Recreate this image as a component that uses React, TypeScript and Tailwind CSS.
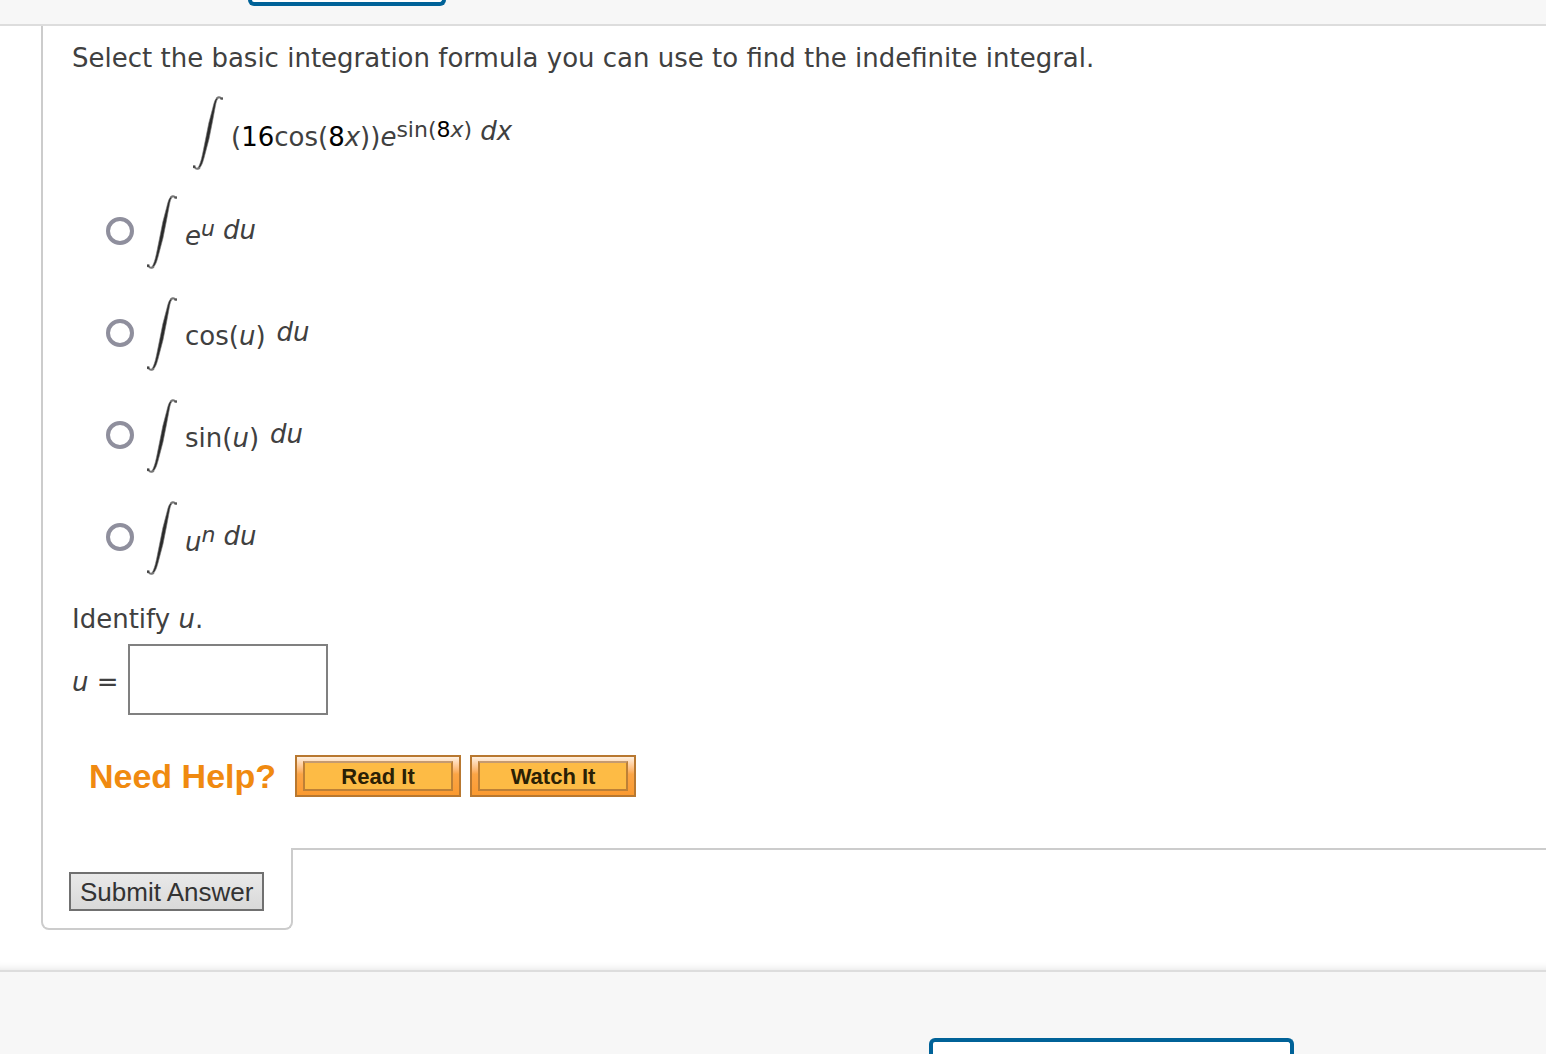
import React, { useState } from 'react';

const Integral = () => (
    <svg viewBox="0 0 30 74" fill="none" className="w-[30px] h-[74px] shrink-0" aria-hidden="true">
        <path d="M25.5 1 C22.5 1.6 21.2 6 20 11 L15.8 27 L11.6 48 C10 56 8.4 64.5 6.6 68.6 C5.8 70.8 5 72 4 72.8 C7.4 73.2 9.4 68 11 62 L16 43 L19.6 25 L22.2 11 C23.2 6 23.8 3 26 1.6 Z" fill="#2a2a2a" stroke="#777" strokeWidth="0.6" />
        <path d="M23.6 2.6 C25 0.8 26.8 1 28 2.2 L30 2.4" stroke="#777" strokeWidth="2" />
        <path d="M27.5 2.6 H30" stroke="#555" strokeWidth="2" />
        <path d="M6.8 71.4 C5.4 73.4 3.4 73.2 2 71.6 L0 71" stroke="#777" strokeWidth="2" />
        <path d="M0 70.6 H2.4" stroke="#444" strokeWidth="2.4" />
    </svg>
);

const Sup = ({ children }: any) => (
    <span className="relative -top-[9px] text-[22px] leading-none">{children}</span>
);

const Num = ({ children }: any) => <span className="text-black">{children}</span>;

const Formula = ({ children, raised, variable }: any) => (
    <span className="flex items-center gap-2 whitespace-nowrap">
        <Integral />
        <span className={raised ? "pt-2" : "pt-1 pr-[3px]"}>{children}</span>
        <i className="pb-1">d{variable}</i>
    </span>
);

const options = [
    { id: "exp", raised: true, body: <><i>e</i><Sup><i>u</i></Sup></> },
    { id: "cos", raised: false, body: <>cos(<i>u</i>)</> },
    { id: "sin", raised: false, body: <>sin(<i>u</i>)</> },
    { id: "power", raised: true, body: <><i>u</i><Sup><i>n</i></Sup></> },
];

const HelpButton = ({ children }: any) => (
    <button
        type="button"
        className="w-[166px] h-[42px] px-[6px] py-1 border-2 border-[#b87830] bg-linear-to-b from-[#fff0e0] via-[#fba545] via-45% to-[#fb9a30] cursor-pointer"
    >
        <span className="flex h-full items-center justify-center border-2 border-[#bd8036] border-t-[#c49a70] bg-[#fdbb45] pt-0.5 text-[22px] leading-6 font-bold text-[#2a2005]">
            {children}
        </span>
    </button>
);

const App = () => {
    const [selected, setSelected] = useState("");
    const [answer, setAnswer] = useState("");

    return (
        <div className="min-h-screen overflow-hidden flex flex-col bg-white text-[26px] leading-8 text-[#404040] font-['DejaVu_Sans',sans-serif]">
            <header className="h-[26px] bg-[#f7f7f7] border-b-2 border-[#ddd] pl-[248px]">
                <div className="w-[198px] h-[6px] rounded-b-lg border-4 border-t-0 border-[#006298] bg-white" />
            </header>

            <main className="pl-[41px] pb-10 border-b-2 border-[#ddd] shadow-[inset_0_-8px_8px_-8px_#0002]">
                <section className="border-l-2 border-[#ccc] pl-[29px] pt-4 pb-[51px]">
                    <h1 className="font-normal">
                        Select the basic integration formula you can use to find the indefinite integral.
                    </h1>
                    <div className="mt-[22px] pl-[121px]">
                        <Formula raised variable="x">
                            (<Num>16</Num>cos(<Num>8</Num><i>x</i>))<i>e</i>
                            <Sup>sin(<Num>8</Num><i>x</i>)</Sup>
                        </Formula>
                    </div>

                    <div className="mt-[25px] pl-[34px] flex flex-col items-start gap-7">
                        {options.map((option) => (
                            <label key={option.id} className="flex items-center gap-[13px]">
                                <input
                                    type="radio"
                                    name="formula"
                                    checked={selected === option.id}
                                    onChange={() => setSelected(option.id)}
                                    className="mb-0.5 size-7 appearance-none rounded-full border-4 border-[#8f8f9d] bg-white checked:border-8"
                                />
                                <Formula raised={option.raised} variable="u">{option.body}</Formula>
                            </label>
                        ))}
                    </div>

                    <p className="mt-7">Identify <i>u</i>.</p>
                    <div className="mt-[9px] flex items-center gap-[9px]">
                        <label htmlFor="answer" className="pt-1"><i>u</i> =</label>
                        <input
                            id="answer"
                            type="text"
                            value={answer}
                            onChange={(e) => setAnswer(e.target.value)}
                            className="w-[200px] h-[71px] border-2 border-[#808080] px-3"
                        />
                    </div>

                    <div className="mt-10 pl-[17px] flex items-center gap-[9px] font-['Liberation_Sans',sans-serif]">
                        <span className="mr-[10px] text-[34px] font-bold text-[#f08a10]">Need Help?</span>
                        <HelpButton>Read It</HelpButton>
                        <HelpButton>Watch It</HelpButton>
                    </div>
                </section>

                <div className="flex">
                    <div className="border-2 border-t-0 border-[#ccc] rounded-b-lg pt-6 pb-[17px] pl-[26px] pr-[27px]">
                        <button
                            type="button"
                            className="block h-[39px] px-[9px] border-2 border-[#707070] bg-linear-to-b from-[#e9e9e9] to-[#d9d9d9] text-[26px] text-[#333] leading-8 font-['Liberation_Sans',sans-serif] cursor-pointer"
                        >
                            Submit Answer
                        </button>
                    </div>
                    <div className="flex-1 border-t-2 border-[#ccc]" />
                </div>
            </main>

            <footer className="flex-1 bg-[#f7f7f7] pt-[66px] flex justify-end pr-[252px]">
                <div className="w-[365px] h-4 rounded-t-md border-4 border-b-0 border-[#006298] bg-white" />
            </footer>
        </div>
    );
};

export default App;
